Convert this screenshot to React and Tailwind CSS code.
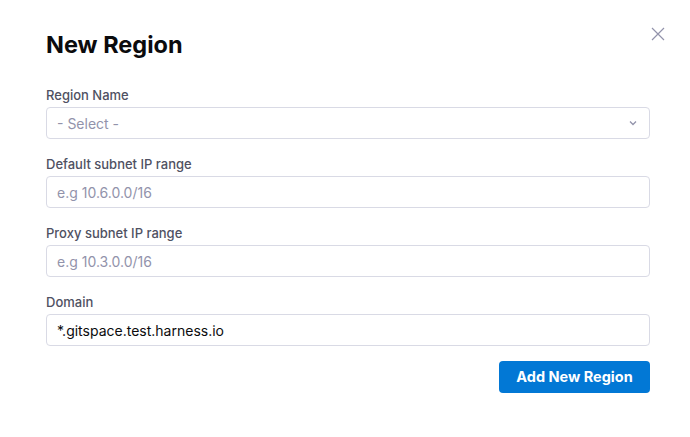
import React from 'react';

const Field = ({ label, children }) => (
  <div className="flex flex-col">
    <label className="text-[13px] font-medium text-[#4f5162] leading-4 mb-[4px]">{label}</label>
    {children}
  </div>
);

const inputClass =
  'h-[32px] w-full rounded-[4px] border border-[#d9dae5] bg-white px-[10px] text-[14px] text-[#0b0b0d] placeholder:text-[#9293ab] outline-none';

export default function App() {
  return (
    <div className="relative w-[690px] h-[437px] bg-white font-['Inter',sans-serif]">
      <button className="absolute right-[24px] top-[26px] text-[#9293ab]">
        <svg width="16" height="16" viewBox="0 0 16 16" fill="none" stroke="currentColor" strokeWidth="1.2">
          <path d="M2 2L14 14M14 2L2 14" />
        </svg>
      </button>
      <div className="pl-[46px] pr-[40px] pt-[30px]">
        <h1 className="text-[23.5px] font-bold text-[#0b0b0d] leading-[30px] mb-[27px]">New Region</h1>
        <div className="flex flex-col gap-[17px]">
          <Field label="Region Name">
            <div className="relative">
              <div className={inputClass + ' flex items-center text-[#9293ab]'}>- Select -</div>
              <svg className="absolute right-[12px] top-[12px]" width="10" height="8" viewBox="0 0 10 8" fill="none" stroke="#9293ab" strokeWidth="1.3">
                <path d="M2 2.5L5 5.5L8 2.5" />
              </svg>
            </div>
          </Field>
          <Field label="Default subnet IP range">
            <input className={inputClass} placeholder="e.g 10.6.0.0/16" />
          </Field>
          <Field label="Proxy subnet IP range">
            <input className={inputClass} placeholder="e.g 10.3.0.0/16" />
          </Field>
          <Field label="Domain">
            <input className={inputClass} defaultValue="*.gitspace.test.harness.io" />
          </Field>
        </div>
        <div className="flex justify-end mt-[15px]">
          <button className="h-[32px] w-[151px] rounded-[4px] bg-[#0278d5] text-white text-[14.5px] font-bold">
            Add New Region
          </button>
        </div>
      </div>
    </div>
  );
}
